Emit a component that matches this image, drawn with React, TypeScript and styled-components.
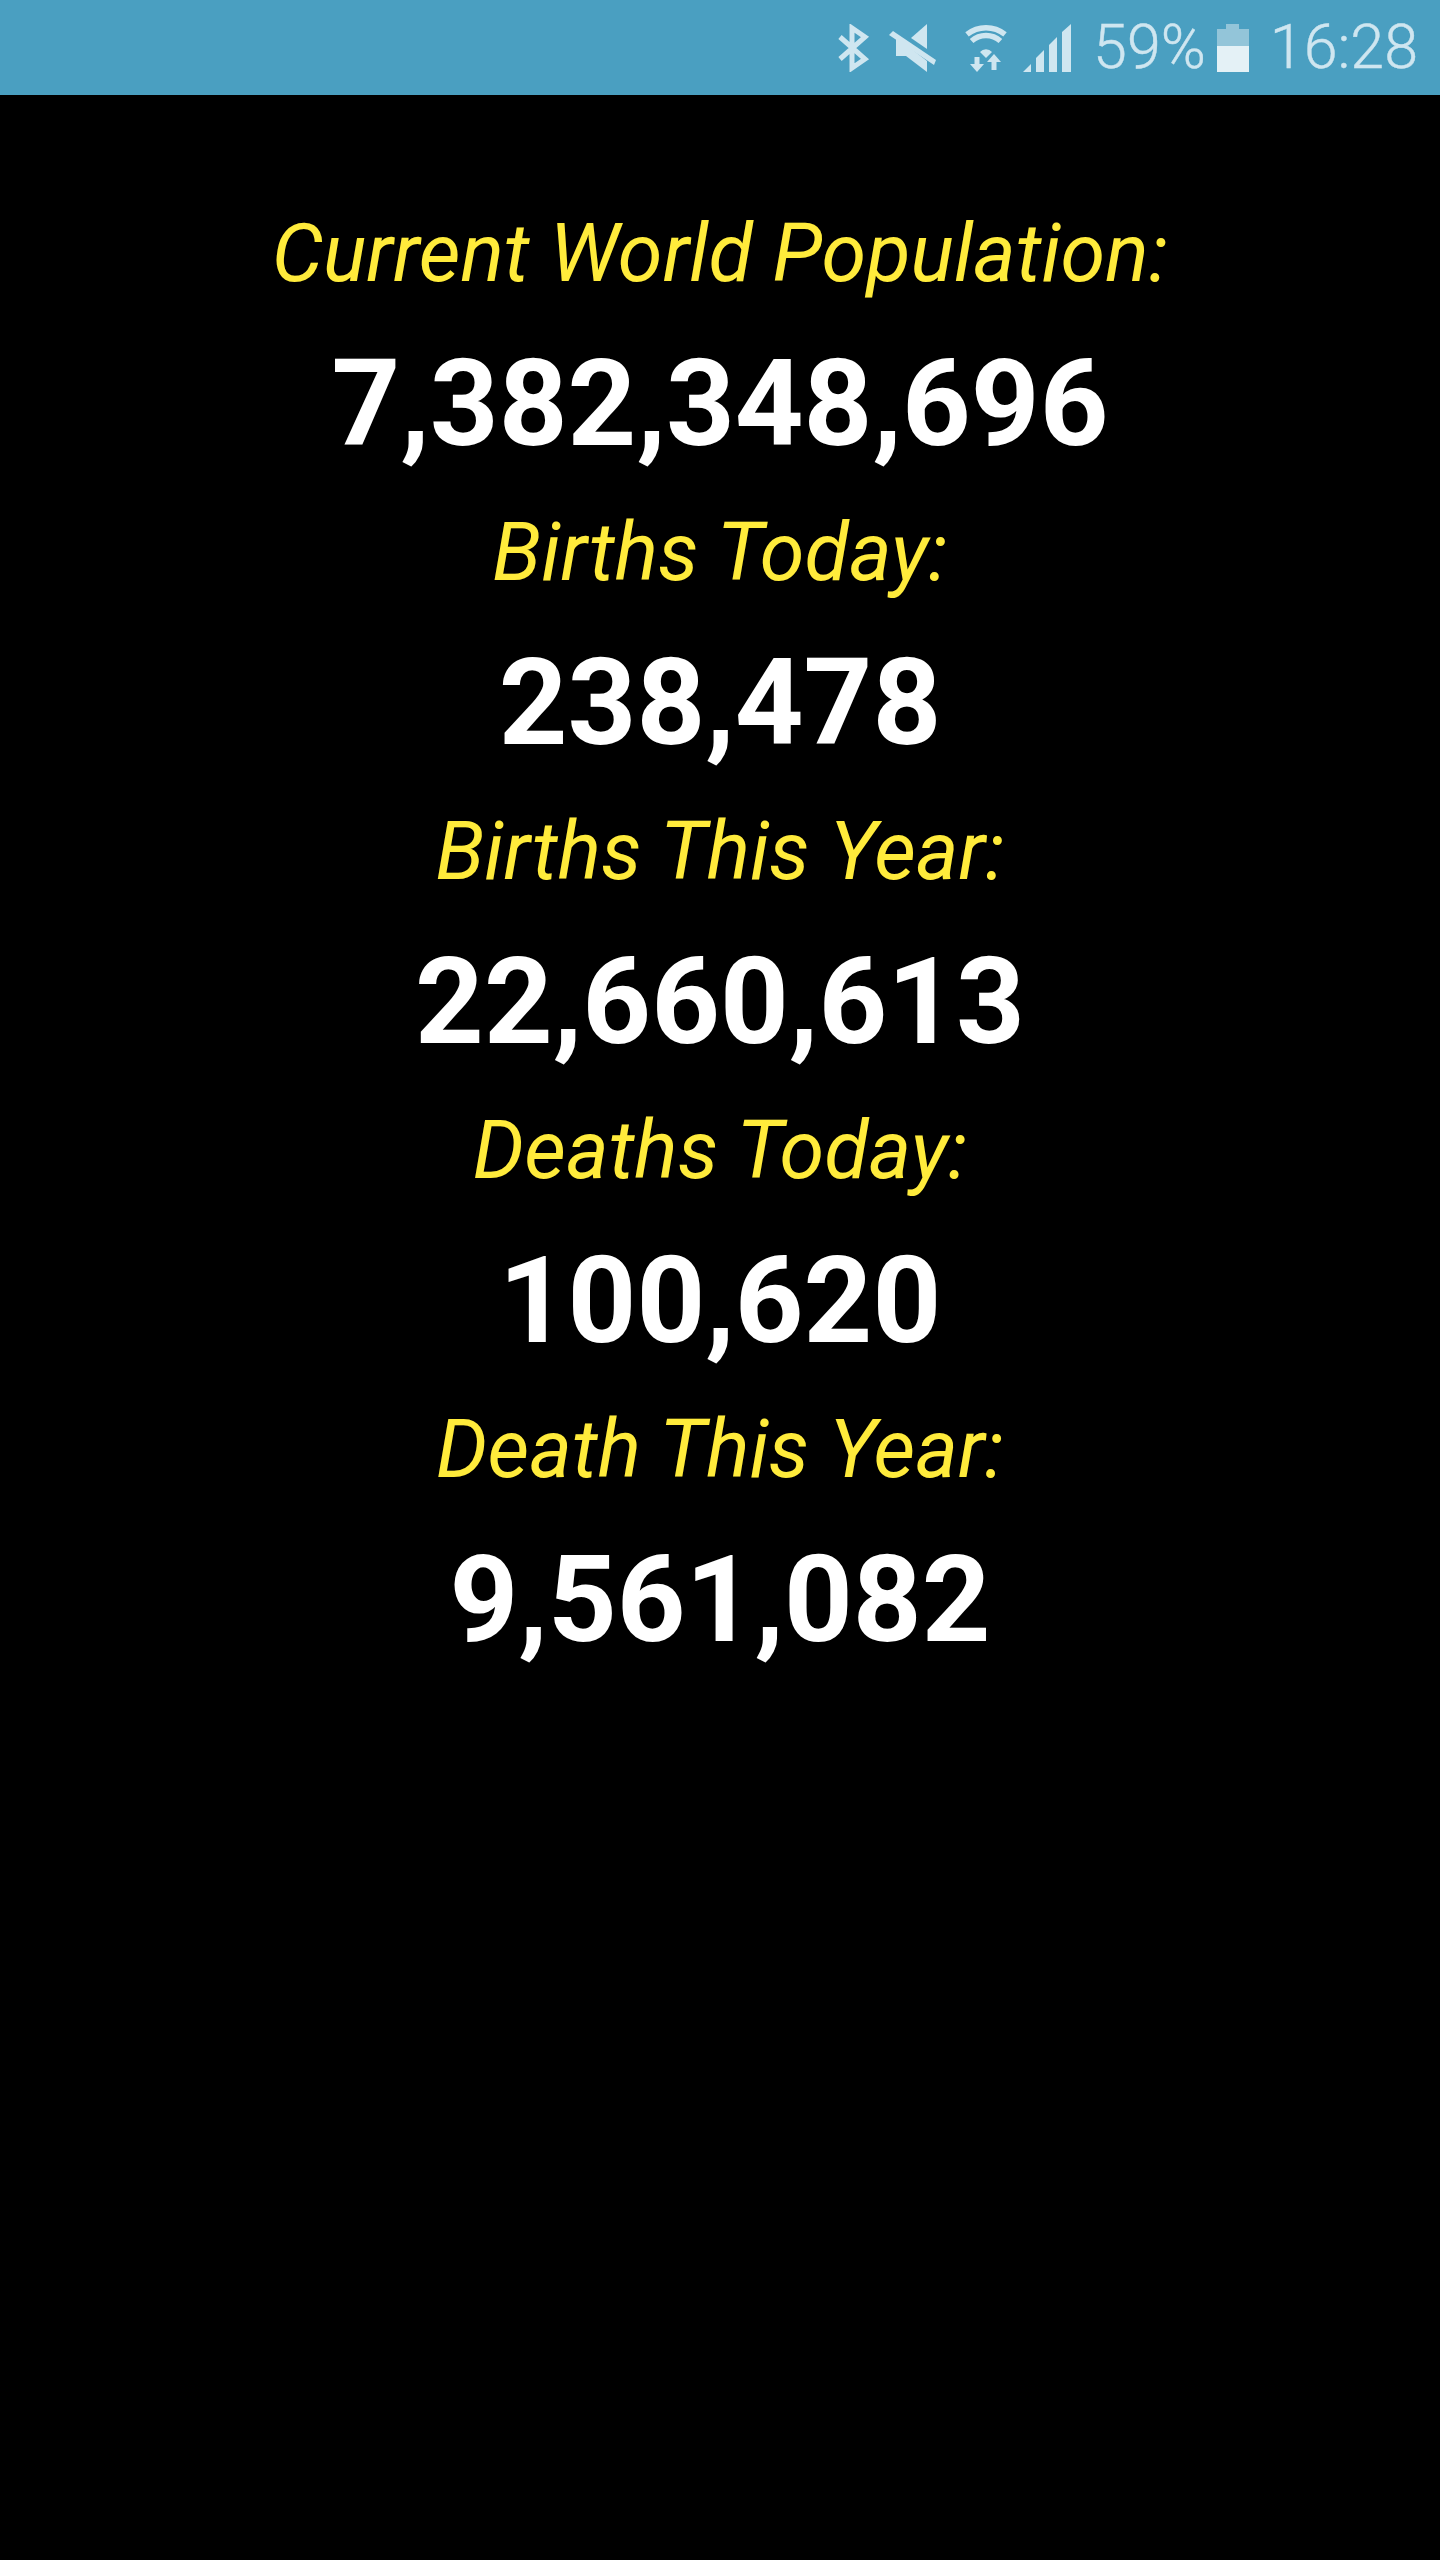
import React from 'react';
import styled, { createGlobalStyle } from 'styled-components';

const GlobalStyle = createGlobalStyle`
  html, body {
    margin: 0;
    padding: 0;
    background: #000;
  }
`;

const Page = styled.div`
  width: 1440px;
  height: 2560px;
  background: #000;
  font-family: Roboto, sans-serif;
  overflow: hidden;
`;

const StatusBar = styled.header`
  height: 95px;
  background: #4a9fc1;
  display: flex;
  align-items: center;
  justify-content: flex-end;
  padding-right: 22px;
  color: #cfe6f0;
`;

const StatusIcon = styled.svg<{ $gap: number }>`
  display: block;
  margin-left: ${(p) => p.$gap}px;
  flex: none;
`;

const StatusText = styled.span<{ $gap: number }>`
  margin-left: ${(p) => p.$gap}px;
  font-size: 61px;
  font-weight: 300;
  line-height: 95px;
  -webkit-text-stroke: 0.4px #cfe6f0;
`;

const Stats = styled.main`
  display: flex;
  flex-direction: column;
  align-items: center;
  padding-top: 112px;
`;

const Label = styled.div`
  color: #ffeb3b;
  font-size: 81px;
  font-style: italic;
  font-weight: 400;
  line-height: 94px;
  white-space: nowrap;
`;

const Count = styled.div`
  color: #fff;
  font-size: 120px;
  font-weight: 700;
  line-height: 203px;
  padding-top: 2px;
  white-space: nowrap;
`;

const stats = [
  { label: 'Current World Population:', count: '7,382,348,696' },
  { label: 'Births Today:', count: '238,478' },
  { label: 'Births This Year:', count: '22,660,613' },
  { label: 'Deaths Today:', count: '100,620' },
  { label: 'Death This Year:', count: '9,561,082' },
];

const App: React.FC = () => (
  <Page>
    <GlobalStyle />
    <StatusBar>
      <StatusIcon $gap={0} width="32" height="48" viewBox="0 0 32 48" fill="none" stroke="#cfe6f0" strokeWidth="5">
        <path d="M2 13 L27 35 L14 44 V4 L27 13 L2 35" />
      </StatusIcon>
      <StatusIcon $gap={19} width="48" height="48" viewBox="0 0 48 48" fill="#cfe6f0">
        <path d="M38 0 V25 L22 14 Z" />
        <path d="M7 13 L38 37 V48 L17 32 H7 Z" />
        <path d="M4 7 L47 36 L45 41 L0 11 Z" />
      </StatusIcon>
      <StatusIcon $gap={28} width="42" height="48" viewBox="0 0 42 48" fill="#cfe6f0">
        <path d="M2 10.3 A30.5 30.5 0 0 1 40 10.3" fill="none" stroke="#cfe6f0" strokeWidth="5.5" />
        <path d="M6.6 17 A21.5 21.5 0 0 1 35.4 17" fill="none" stroke="#cfe6f0" strokeWidth="5.5" />
        <path d="M15 28 A8 8 0 0 1 27 28 L21 34 Z" />
        <path d="M9.5 33 H14.5 V40 H19 L12 48 L5 40 H9.5 Z" />
        <path d="M29 30 L36 38 H31.5 V46 H26.5 V38 H22 Z" />
      </StatusIcon>
      <StatusIcon $gap={16} width="48" height="48" viewBox="0 0 48 48" fill="#cfe6f0">
        <path d="M0 48 L8 40 V48 Z" />
        <path d="M13 48 V34 L21 26 V48 Z" />
        <path d="M26 48 V21 L34 13 V48 Z" />
        <path d="M39 48 V8 L48 0 V48 Z" />
      </StatusIcon>
      <StatusText $gap={22}>59%</StatusText>
      <StatusIcon $gap={11} width="32" height="48" viewBox="0 0 32 48">
        <path d="M9 0 H22 V5 H32 V22 H0 V5 H9 Z" fill="#93c5d9" />
        <path d="M0 22 H32 V48 H0 Z" fill="#e4f1f6" />
      </StatusIcon>
      <StatusText $gap={21}>16:28</StatusText>
    </StatusBar>
    <Stats>
      {stats.map(({ label, count }) => (
        <React.Fragment key={label}>
          <Label>{label}</Label>
          <Count>{count}</Count>
        </React.Fragment>
      ))}
    </Stats>
  </Page>
);

export default App;
